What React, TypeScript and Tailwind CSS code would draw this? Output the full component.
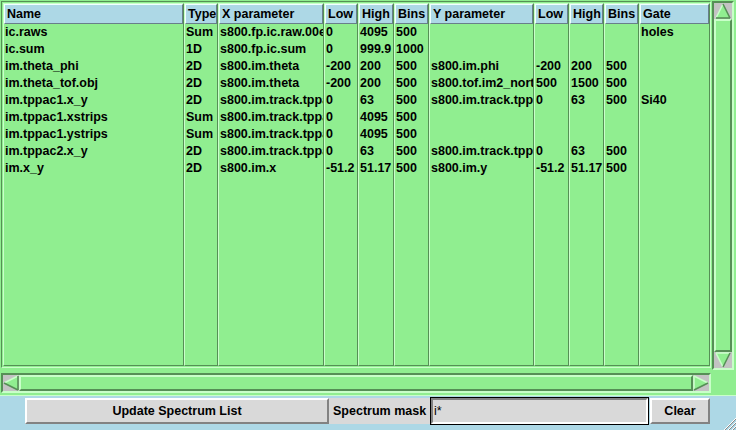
import React from "react";

const cols: { title: string; w: string }[] = [
  { title: "Name", w: "w-[181px]" },
  { title: "Type", w: "w-[34px]" },
  { title: "X parameter", w: "w-[106px]" },
  { title: "Low", w: "w-[34px]" },
  { title: "High", w: "w-[36px]" },
  { title: "Bins", w: "w-[35px]" },
  { title: "Y parameter", w: "w-[105px]" },
  { title: "Low", w: "w-[35px]" },
  { title: "High", w: "w-[35px]" },
  { title: "Bins", w: "w-[35px]" },
  { title: "Gate", w: "w-[71px]" },
];

const rows: string[][] = [
  ["ic.raws", "Sum", "s800.fp.ic.raw.00e", "0", "4095", "500", "", "", "", "", "holes"],
  ["ic.sum", "1D", "s800.fp.ic.sum", "0", "999.9", "1000", "", "", "", "", ""],
  ["im.theta_phi", "2D", "s800.im.theta", "-200", "200", "500", "s800.im.phi", "-200", "200", "500", ""],
  ["im.theta_tof.obj", "2D", "s800.im.theta", "-200", "200", "500", "s800.tof.im2_north", "500", "1500", "500", ""],
  ["im.tppac1.x_y", "2D", "s800.im.track.tppac1.x", "0", "63", "500", "s800.im.track.tppac1.y", "0", "63", "500", "Si40"],
  ["im.tppac1.xstrips", "Sum", "s800.im.track.tppac1.xs", "0", "4095", "500", "", "", "", "", ""],
  ["im.tppac1.ystrips", "Sum", "s800.im.track.tppac1.ys", "0", "4095", "500", "", "", "", "", ""],
  ["im.tppac2.x_y", "2D", "s800.im.track.tppac2.x", "0", "63", "500", "s800.im.track.tppac2.y", "0", "63", "500", ""],
  ["im.x_y", "2D", "s800.im.x", "-51.2", "51.17", "500", "s800.im.y", "-51.2", "51.17", "500", ""],
];

function Arrow({ dir }: { dir: "up" | "down" | "left" | "right" }) {
  const L = "#c9ffc9";
  const D = "#568f56";
  const G = "#90ee90";
  let pts = "";
  let edges: [number, number, number, number, string][] = [];
  if (dir === "up") {
    pts = "8,1 15,15 1,15";
    edges = [
      [1, 15, 8, 1, L],
      [8, 1, 15, 15, D],
      [15, 15, 1, 15, D],
    ];
  } else if (dir === "down") {
    pts = "1,1 15,1 8,15";
    edges = [
      [1, 1, 15, 1, L],
      [1, 1, 8, 15, L],
      [15, 1, 8, 15, D],
    ];
  } else if (dir === "left") {
    pts = "1,8 15,1 15,15";
    edges = [
      [1, 8, 15, 1, L],
      [1, 8, 15, 15, D],
      [15, 1, 15, 15, D],
    ];
  } else {
    pts = "1,1 15,8 1,15";
    edges = [
      [1, 1, 15, 8, L],
      [1, 1, 1, 15, L],
      [1, 15, 15, 8, D],
    ];
  }
  return (
    <div className="w-[16px] h-[16px] bg-[#c3c3c3] shrink-0">
      <svg width="16" height="16" viewBox="0 0 16 16">
        <polygon points={pts} fill={G} />
        {edges.map((e, i) => (
          <line key={i} x1={e[0]} y1={e[1]} x2={e[2]} y2={e[3]} stroke={e[4]} strokeWidth="1.6" />
        ))}
      </svg>
    </div>
  );
}

export default function App() {
  return (
    <div
      className="w-[736px] h-[430px] flex flex-col overflow-hidden text-black font-bold text-[12.5px]"
      style={{ fontFamily: '"Liberation Sans", Arial, sans-serif' }}
    >
      {/* top green area */}
      <div className="h-[396px] bg-[#90ee90] flex flex-col border-b border-[#c9ffc9]">
        <div className="h-[370px] flex">
          {/* table frame */}
          <div className="w-[711px] pl-[1px] pt-[1px]">
            <div className="border border-t-[#568f56] border-l-[#568f56] border-r-[#c9ffc9] border-b-[#c9ffc9] pl-[1px] pt-[1px] pb-[1px] flex">
              {cols.map((c, ci) => (
                <div
                  key={ci}
                  className={`${c.w} h-[363px] flex flex-col border-l border-t border-l-[#c9ffc9] border-t-[#c9ffc9] border-r border-b border-r-[#568f56] border-b-[#568f56]`}
                >
                  <div className="h-[20px] bg-[#add8e6] border border-t-[#f2ffff] border-l-[#f2ffff] border-r-[#687f8a] border-b-[#687f8a] pl-[2px] leading-[18px] whitespace-nowrap overflow-hidden">
                    {c.title}
                  </div>
                  <div className="flex-1 overflow-hidden">
                    {rows.map((r, ri) => (
                      <div key={ri} className="h-[17px] leading-[17px] pl-[1px] whitespace-nowrap overflow-hidden">
                        {r[ci]}
                      </div>
                    ))}
                  </div>
                </div>
              ))}
            </div>
          </div>
          {/* vertical scrollbar */}
          <div className="ml-[1px] mt-[1px] w-[22px] h-[369px] border-2 border-t-[#568f56] border-l-[#568f56] border-r-[#c9ffc9] border-b-[#c9ffc9] bg-[#c3c3c3] flex flex-col items-center">
            <Arrow dir="up" />
            <div className="w-[18px] flex-1 bg-[#90ee90] border-2 border-t-[#c9ffc9] border-l-[#c9ffc9] border-r-[#568f56] border-b-[#568f56]" />
            <Arrow dir="down" />
          </div>
        </div>
        {/* horizontal scrollbar row */}
        <div className="h-[25px] flex pt-[3px]">
          <div className="ml-[1px] w-[710px] h-[20px] border-2 border-t-[#568f56] border-l-[#568f56] border-r-[#c9ffc9] border-b-[#c9ffc9] bg-[#c3c3c3] flex">
            <Arrow dir="left" />
            <div className="flex-1 h-[16px] bg-[#90ee90] border-2 border-t-[#c9ffc9] border-l-[#c9ffc9] border-r-[#568f56] border-b-[#568f56]" />
            <Arrow dir="right" />
          </div>
        </div>
      </div>
      {/* bottom bar */}
      <div className="relative flex-1 bg-[#add8e6] flex items-start pt-[2px] pl-[25px]">
        <div className="w-[304px] h-[26px] bg-[#d9d9d9] border-2 border-t-white border-l-white border-r-[#828282] border-b-[#828282] flex items-center justify-center">
          Update Spectrum List
        </div>
        <div className="w-[101px] h-[26px] bg-[#d9d9d9] flex items-center pl-[4px] whitespace-nowrap">
          Spectrum mask
        </div>
        <div className="w-[219px] h-[28px] mt-[-1px] border border-black">
          <div className="h-full bg-[#d9d9d9] border-2 border-t-[#828282] border-l-[#828282] border-r-white border-b-white pl-[1px] font-normal leading-[22px]">
            i*
          </div>
        </div>
        <div className="w-[60px] h-[26px] ml-[1px] bg-[#d9d9d9] border-2 border-t-white border-l-white border-r-[#828282] border-b-[#828282] flex items-center justify-center">
          Clear
        </div>
        <svg className="absolute right-0 bottom-0" width="14" height="14" viewBox="0 0 14 14">
          <line x1="2" y1="14" x2="14" y2="2" stroke="#ffffff" strokeWidth="1" />
          <line x1="3" y1="14" x2="14" y2="3" stroke="#8a8a8a" strokeWidth="1" />
          <line x1="6" y1="14" x2="14" y2="6" stroke="#ffffff" strokeWidth="1" />
          <line x1="7" y1="14" x2="14" y2="7" stroke="#8a8a8a" strokeWidth="1" />
          <line x1="10" y1="14" x2="14" y2="10" stroke="#ffffff" strokeWidth="1" />
          <line x1="11" y1="14" x2="14" y2="11" stroke="#8a8a8a" strokeWidth="1" />
        </svg>
      </div>
    </div>
  );
}
